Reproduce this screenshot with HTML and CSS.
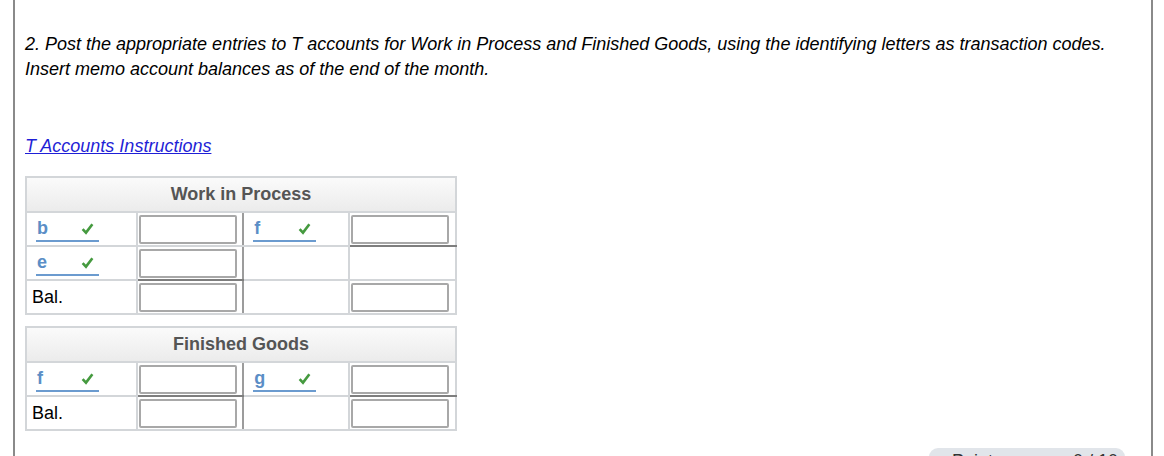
FILE: index.html
```html
<!DOCTYPE html>
<html lang="en">
<head>
    <meta charset="UTF-8">
    <title>T Accounts</title>
    <link rel="stylesheet" href="styles.css">
</head>
<body>
    <div class="frame">
        <p class="prompt">2. Post the appropriate entries to T accounts for Work in Process and Finished Goods, using the identifying letters as transaction codes.<br>Insert memo account balances as of the end of the month.</p>

        <a class="help" href="#">T Accounts Instructions</a>

        <!-- Work in Process -->
        <table class="taccount">
            <tr><th colspan="4">Work in Process</th></tr>
            <tr>
                <td class="code"><span class="pick">b<svg class="tick" viewBox="0 0 12 12"><path d="M1.5 6.5 L4.6 9.8 L10.5 2"/></svg></span></td>
                <td class="debit"><input class="field" type="text"></td>
                <td class="code"><span class="pick">f<svg class="tick" viewBox="0 0 12 12"><path d="M1.5 6.5 L4.6 9.8 L10.5 2"/></svg></span></td>
                <td class="sum"><input class="field" type="text"></td>
            </tr>
            <tr>
                <td class="code"><span class="pick">e<svg class="tick" viewBox="0 0 12 12"><path d="M1.5 6.5 L4.6 9.8 L10.5 2"/></svg></span></td>
                <td class="debit sum"><input class="field" type="text"></td>
                <td></td>
                <td></td>
            </tr>
            <tr>
                <td class="label">Bal.</td>
                <td class="debit"><input class="field" type="text"></td>
                <td></td>
                <td><input class="field" type="text"></td>
            </tr>
        </table>

        <!-- Finished Goods -->
        <table class="taccount second">
            <tr><th colspan="4">Finished Goods</th></tr>
            <tr>
                <td class="code"><span class="pick">f<svg class="tick" viewBox="0 0 12 12"><path d="M1.5 6.5 L4.6 9.8 L10.5 2"/></svg></span></td>
                <td class="debit sum"><input class="field" type="text"></td>
                <td class="code"><span class="pick">g<svg class="tick" viewBox="0 0 12 12"><path d="M1.5 6.5 L4.6 9.8 L10.5 2"/></svg></span></td>
                <td class="sum"><input class="field" type="text"></td>
            </tr>
            <tr>
                <td class="label">Bal.</td>
                <td class="debit"><input class="field" type="text"></td>
                <td></td>
                <td><input class="field" type="text"></td>
            </tr>
        </table>

        <div class="points">
            <span class="points-icon"></span>
            <span class="points-label">Points:</span>
            <span class="points-bar"><span class="points-fill"></span></span>
            <span class="points-score">0 / 10</span>
        </div>
    </div>
</body>
</html>
```

FILE: styles.css
```css
/* page */
body {
    margin: 0;
    font-family: 'Liberation Sans', Arial, sans-serif;
    color: #000;
    background: #fff;
}

.frame {
    margin-left: 13px;
    width: 1126px;
    min-height: 520px;
    padding: 0 0 0 10px;
    box-sizing: content-box;
    border-left: 2px solid #8a8a8a;
    border-right: 2px solid #8a8a8a;
    overflow: hidden;
}

.prompt {
    margin: 32px 0 0;
    font-size: 18px;
    font-style: italic;
    line-height: 25px;
}

.help {
    display: inline-block;
    margin-top: 52px;
    font-size: 18px;
    font-style: italic;
    line-height: 25px;
    color: #1f1fd6;
}

/* T accounts */
.taccount {
    border-collapse: collapse;
    width: 432px;
    margin-top: 17px;
}

.taccount.second {
    margin-top: 11px;
}

.taccount th,
.taccount td {
    border: 2px solid #d3d6d9;
    padding: 0;
}

.taccount th {
    height: 33px;
    background: linear-gradient(#fbfbfb, #ebebeb);
    font-size: 18px;
    font-weight: bold;
    color: #555;
}

.taccount td {
    height: 32px;
    width: 105px;
    vertical-align: middle;
}

.taccount td.code,
.taccount td.label {
    width: 107px;
}

.taccount td.debit {
    border-right-color: #9c9c9c;
}

.taccount td.sum {
    border-bottom-color: #7e7e7e;
}

.label {
    padding-left: 5px !important;
    font-size: 18px;
}

.pick {
    display: inline-flex;
    align-items: center;
    justify-content: space-between;
    width: 57px;
    margin-left: 9px;
    padding: 1px 5px 1px 1px;
    border-bottom: 2px solid #6b9bcf;
    font-size: 18px;
    line-height: 21px;
    font-weight: bold;
    color: #5b8ec6;
}

.tick {
    width: 13px;
    height: 13px;
    fill: none;
    stroke: #459a3f;
    stroke-width: 2.4;
}

.field {
    display: block;
    width: 98px;
    height: 29px;
    margin-left: 1px;
    box-sizing: border-box;
    border: 2px solid #a8a8a8;
    border-radius: 2px;
    background: #fff;
    font-size: 14px;
}

/* points badge */
.points {
    display: flex;
    align-items: center;
    gap: 7px;
    float: right;
    margin: 17px 26px 0 0;
    padding: 3px 7px 3px 6px;
    border-radius: 9px;
    background: #e1e5ea;
    font-size: 18px;
    color: #333;
}

.points-icon {
    width: 10px;
    height: 5px;
    margin-top: -4px;
    background: #b8bec5;
}

.points-bar {
    width: 52px;
    height: 6px;
    margin-top: -6px;
    background: #c4cad1;
}

.points-fill {
    display: block;
    width: 30px;
    height: 100%;
    background: #5b84b8;
}
```
